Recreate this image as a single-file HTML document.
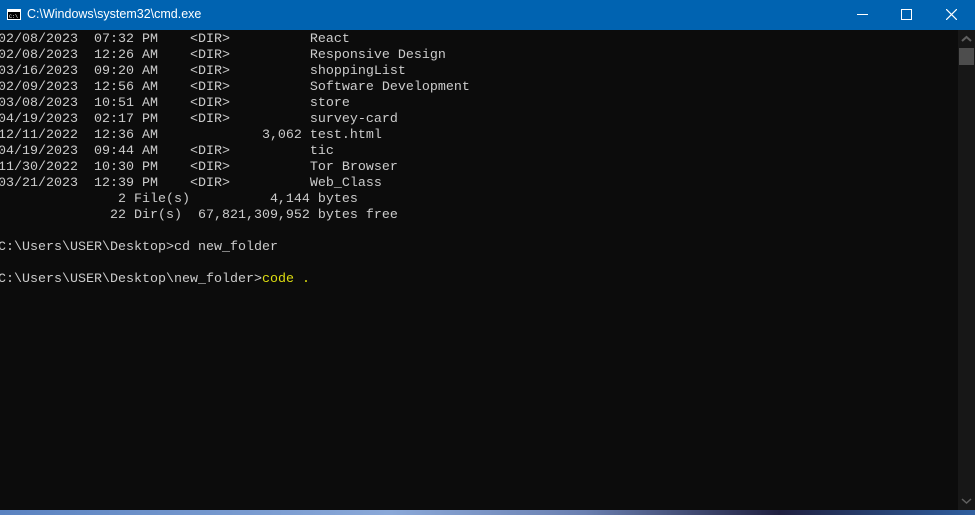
<!DOCTYPE html>
<html><head><style>
html,body{margin:0;padding:0;width:975px;height:515px;overflow:hidden;background:#0c0c0c}
#title{position:absolute;left:0;top:0;width:975px;height:30px;background:#0063b1;color:#fff;font-family:"Liberation Sans",sans-serif;font-size:12.5px}
#title .t{position:absolute;left:27px;top:7px}
#term{position:absolute;left:0;top:30px;width:958px;height:480px;background:#0c0c0c;overflow:hidden}
pre{position:absolute;left:-2px;top:2px;margin:0;font-family:"Liberation Mono",monospace;font-size:13.33px;line-height:16px;color:#cccccc}
.y{color:#dcdc10}
#sb{position:absolute;left:958px;top:30px;width:17px;height:480px;background:#171717}
#thumb{position:absolute;left:959px;top:48px;width:15px;height:17px;background:#4d4d4d}
#task{position:absolute;left:0;top:510px;width:975px;height:5px;background:linear-gradient(90deg,#5a82c0,#8aa8d8 40%,#6a7fb0 60%,#202040 80%,#3060a0)}
</style></head><body>
<div id="title">
<svg style="position:absolute;left:7px;top:9px" width="14" height="11"><rect x="0.5" y="0.5" width="13" height="10" fill="#000" stroke="#fff"/><rect x="1" y="1" width="12" height="2" fill="#fff"/><text x="2" y="9" font-size="5" fill="#fff" font-family="Liberation Mono">C:\</text></svg>
<span class="t">C:\Windows\system32\cmd.exe</span>
<div style="position:absolute;left:857px;top:14px;width:11px;height:1px;background:#fff"></div>
<div style="position:absolute;left:901px;top:9px;width:9px;height:9px;border:1px solid #fff"></div>
<svg style="position:absolute;left:946px;top:9px" width="11" height="11"><path d="M0 0L11 11M11 0L0 11" stroke="#fff" stroke-width="1.2"/></svg>
</div>
<div id="term"><pre>02/08/2023  07:32 PM    &lt;DIR&gt;          React
02/08/2023  12:26 AM    &lt;DIR&gt;          Responsive Design
03/16/2023  09:20 AM    &lt;DIR&gt;          shoppingList
02/09/2023  12:56 AM    &lt;DIR&gt;          Software Development
03/08/2023  10:51 AM    &lt;DIR&gt;          store
04/19/2023  02:17 PM    &lt;DIR&gt;          survey-card
12/11/2022  12:36 AM             3,062 test.html
04/19/2023  09:44 AM    &lt;DIR&gt;          tic
11/30/2022  10:30 PM    &lt;DIR&gt;          Tor Browser
03/21/2023  12:39 PM    &lt;DIR&gt;          Web_Class
               2 File(s)          4,144 bytes
              22 Dir(s)  67,821,309,952 bytes free

C:\Users\USER\Desktop&gt;cd new_folder

C:\Users\USER\Desktop\new_folder&gt;<span class="y">code .</span></pre></div>
<div id="sb"></div>
<svg style="position:absolute;left:961px;top:35px" width="11" height="8"><path d="M1 6L5.5 2L10 6" stroke="#606060" stroke-width="2" fill="none"/></svg>
<div id="thumb"></div>
<svg style="position:absolute;left:961px;top:497px" width="11" height="8"><path d="M1 2L5.5 6L10 2" stroke="#606060" stroke-width="1.5" fill="none"/></svg>
<div id="task"></div>
</body></html>
